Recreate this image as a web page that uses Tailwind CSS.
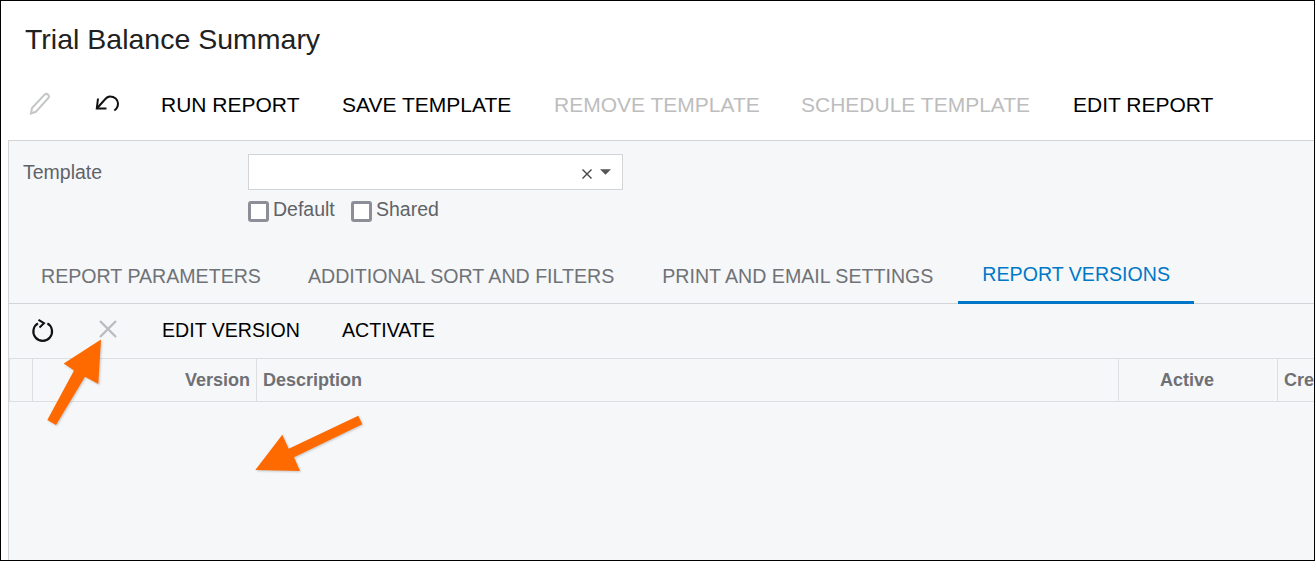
<!DOCTYPE html>
<html>
<head>
<meta charset="utf-8">
<script src="https://cdn.jsdelivr.net/npm/@tailwindcss/browser@4"></script>
</head>
<body class="m-0 bg-white">
<div class="relative w-[1315px] h-[561px] overflow-hidden bg-white border border-black font-['Liberation_Sans',Arial,sans-serif] flex flex-col">
  <h1 class="m-0 pl-[24px] pt-[21px] h-[66px] text-[28.500px] leading-[34px] font-normal text-[#212121]">Trial Balance Summary</h1>
  <div class="h-[73px] flex items-center text-[21px] text-black pt-[2px]">
    <div class="w-[160px] flex items-center shrink-0">
      <svg class="ml-[26px] -mt-[2px]" width="26" height="26" viewBox="0 0 26 26" fill="none" stroke="#c4c6c8" stroke-width="2"><path d="M4 22.500l1-5.500L17.500 3.800c1-1 2.600-1 3.600 0s1 2.500 0 3.500L8.800 20.800z"/></svg>
      <svg class="ml-[41px] -mt-[4px]" width="26" height="26" viewBox="0 0 26 26" fill="none" stroke="#111" stroke-width="2"><path d="M4 8.500L2.800 18.500 12.500 18.500"/><path d="M2.800 18.500L10 10.500C11.500 8.500 13 6.500 16 6.500C20.500 6.500 24 9.500 24 13.500C24 16.500 22.500 19 20.300 20.500"/></svg>
    </div>
    <span class="w-[181px] shrink-0">RUN REPORT</span>
    <span class="w-[212px] shrink-0">SAVE TEMPLATE</span>
    <span class="w-[247px] shrink-0 text-[#bdbdbd]">REMOVE TEMPLATE</span>
    <span class="w-[272px] shrink-0 text-[#bdbdbd]">SCHEDULE TEMPLATE</span>
    <span class="shrink-0">EDIT REPORT</span>
  </div>
  <div class="ml-[7px] flex-1 bg-[#f6f7f9] border-l border-t border-[#d2d4d8] flex flex-col min-h-0">
    <div class="h-[113px] relative shrink-0 flex">
      <div class="w-[239px] pl-[14px] pt-[20px] text-[19.500px] leading-[22px] text-[#5f6368] shrink-0">Template</div>
      <div class="pt-[13px]">
        <div class="w-[375px] h-[36px] bg-white border border-[#d2d4d8] flex items-center justify-end pr-[11px]">
          <svg width="12" height="12" viewBox="0 0 12 12" class="mt-[3px]" fill="none" stroke="#444" stroke-width="1.400"><path d="M1.500 1.500l9 9M10.500 1.500l-9 9"/></svg>
          <svg width="11" height="6" viewBox="0 0 12 6" class="ml-[7px]"><path d="M0 0h12L6 6z" fill="#555"/></svg>
        </div>
        <div class="flex mt-[8px] text-[19.500px] leading-[22px] text-[#5f6368]">
          <span class="flex items-start w-[103px]"><span class="mt-[3px] w-[21px] h-[21px] rounded-[3px] border-[3px] border-[#8e8e98] bg-white shrink-0"></span><span class="ml-[4px]">Default</span></span>
          <span class="flex items-start"><span class="mt-[3px] w-[21px] h-[21px] rounded-[3px] border-[3px] border-[#8e8e98] bg-white shrink-0"></span><span class="ml-[4px]">Shared</span></span>
        </div>
      </div>
    </div>
    <div class="h-[50px] border-b border-[#d2d4d8] flex text-[19.600px] text-[#6f7276] shrink-0">
      <span class="ml-[7px] pl-[25px] pr-[23px] flex items-center h-[49px] pb-[4px]">REPORT PARAMETERS</span>
      <span class="px-[24px] flex items-center h-[49px] pb-[4px]">ADDITIONAL SORT AND FILTERS</span>
      <span class="pl-[24px] pr-[25px] flex items-center h-[49px] pb-[4px]">PRINT AND EMAIL SETTINGS</span>
      <span class="px-[24px] flex items-center h-[50px] pb-[6px] border-b-[3px] border-[#0076c8] text-[#0078c8]">REPORT VERSIONS</span>
    </div>
    <div class="h-[54px] flex items-center text-[19.600px] text-black shrink-0 pb-[1px]">
      <div class="w-[153px] flex items-center shrink-0">
        <svg class="ml-[21px]" width="24" height="24" viewBox="0 0 24 24" fill="none" stroke="#111" stroke-width="2.200"><path d="M8 4.400A9.350 9.350 0 1 0 17.400 4.400"/><path d="M8.500 .8L14 4.200 9.500 8.500" stroke-width="2"/></svg>
        <svg class="ml-[43px] mb-[3px]" width="22" height="22" viewBox="0 0 22 22" fill="none" stroke="#b9bcc0" stroke-width="2.400"><path d="M3 3l16 16M19 3L3 19"/></svg>
      </div>
      <span class="w-[180px] shrink-0">EDIT VERSION</span>
      <span class="shrink-0">ACTIVATE</span>
    </div>
    <div class="h-[44px] flex border border-r-0 border-[#dcdee1] text-[18px] font-bold text-[#6e7074] shrink-0 leading-[42px]">
      <div class="w-[23px] border-r border-[#dcdee1] shrink-0"></div>
      <div class="w-[224px] border-r border-[#dcdee1] shrink-0 text-right pr-[6px]">Version</div>
      <div class="w-[862px] border-r border-[#dcdee1] shrink-0 pl-[6px]">Description</div>
      <div class="w-[159px] border-r border-[#dcdee1] shrink-0 text-right pr-[63px]">Active</div>
      <div class="pl-[6px] whitespace-nowrap">Cre</div>
    </div>
  </div>
  <svg class="absolute left-[-1px] top-[-1px] pointer-events-none drop-shadow-[1px_1px_1px_rgba(0,0,0,0.2)]" width="1315" height="561" viewBox="0 0 1315 561">
    <polygon points="101,339.500 63.700,363.500 74,370.500 47.300,420 56,425 85,376.700 98.300,384" fill="#ff6a00"/>
    <polygon points="255.300,470 282.300,434.700 288.700,448.700 358.300,415.700 362.300,424.300 294,457.300 300,471" fill="#ff6a00"/>
  </svg>
</div>
</body>
</html>
